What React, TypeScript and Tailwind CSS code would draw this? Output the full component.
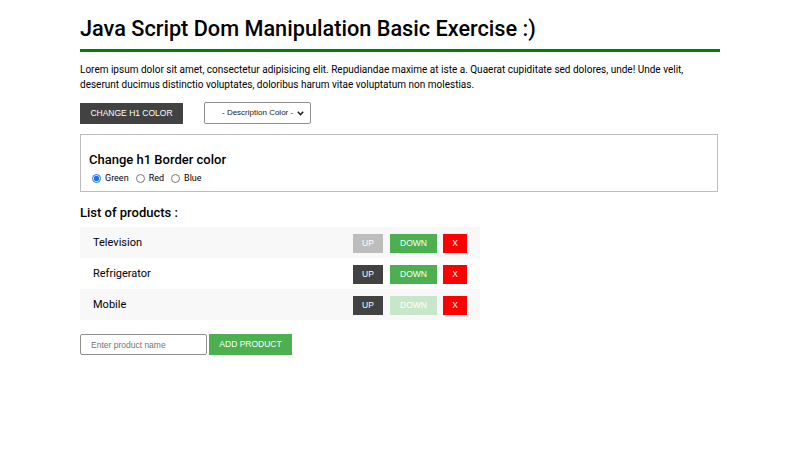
import { useState } from "react";

export default function App() {
  const [products, setProducts] = useState(["Television", "Refrigerator", "Mobile"]);
  const [border, setBorder] = useState("green");
  const [name, setName] = useState("");

  function move(index: number, dir: number) {
    setProducts((prev) => {
      const next = [...prev];
      const t = index + dir;
      if (t < 0 || t >= next.length) return prev;
      [next[index], next[t]] = [next[t], next[index]];
      return next;
    });
  }

  const borderClass =
    border === "green" ? "border-[#008000]" : border === "red" ? "border-[#ff0000]" : "border-[#0000ff]";

  return (
    <div className="min-h-[450px] bg-white font-['Roboto',sans-serif] text-black">
      <div className="mx-auto w-[640px] pt-[14px]">
        <h1 className={"border-b-[3px] pb-[5px] text-[21.7px] font-medium leading-[30px] " + borderClass}>
          Java Script Dom Manipulation Basic Exercise :)
        </h1>
        <p className="mt-[10px] text-[10px] leading-[15px]">
          Lorem ipsum dolor sit amet, consectetur adipisicing elit. Repudiandae maxime at iste a. Quaerat cupiditate sed dolores, unde! Unde velit, deserunt ducimus distinctio voluptates, doloribus harum vitae voluptatum non molestias.
        </p>

        <div className="mt-[10px] flex items-center gap-[21px] font-['Liberation_Sans',sans-serif]">
          <button className="h-[21px] w-[103px] bg-[#424242] text-[8.5px] text-white">CHANGE H1 COLOR</button>
          <div className="relative h-[22px] w-[107px]">
            <select className="block h-[22px] w-full appearance-none rounded-[2px] border border-[#8f8f8f] bg-white pl-[17px] text-[8px] text-[#222]">
              <option>- Description Color -</option>
              <option>Red</option>
              <option>Blue</option>
            </select>
            <svg
              className="pointer-events-none absolute right-[7px] top-[9px]"
              width="7"
              height="5"
              viewBox="0 0 7 5"
              fill="none"
            >
              <path d="M0.8 0.8 L3.5 3.6 L6.2 0.8" stroke="#222" strokeWidth="1.5" />
            </svg>
          </div>
        </div>

        <div className="mt-[10px] w-[638px] border border-[#bdbdbd] px-[8px] pb-[6px] pt-[16px]">
          <h2 className="text-[13px] font-medium leading-[18px]">Change h1 Border color</h2>
          <div className="mt-[2px] flex items-center text-[9px] leading-[14px]">
            {["Green", "Red", "Blue"].map((c) => (
              <label key={c} className="mr-[4px] flex items-center">
                <input
                  type="radio"
                  name="border"
                  checked={border === c.toLowerCase()}
                  onChange={() => setBorder(c.toLowerCase())}
                  className="ml-[3px] mr-[4px] h-[9px] w-[9px] accent-[#1a73e8]"
                />
                {c}
              </label>
            ))}
          </div>
        </div>

        <h3 className="mt-[12px] text-[13px] font-medium leading-[18px]">List of products :</h3>

        <ul className="mt-[5px] w-[400px]">
          {products.map((p, i) => (
            <li
              key={p}
              className={"flex h-[31px] items-center px-[13px] " + (i % 2 === 0 ? "bg-[#f8f8f8]" : "bg-white")}
            >
              <span className="flex-1 pt-[2px] text-[11px]">{p}</span>
              <div className="flex items-center pt-[1px] font-['Liberation_Sans',sans-serif] text-[8.5px] text-white">
                <button
                  disabled={i === 0}
                  onClick={() => move(i, -1)}
                  className={"h-[19px] w-[30px] " + (i === 0 ? "bg-[#bdbdbd]" : "bg-[#424242]")}
                >
                  UP
                </button>
                <button
                  disabled={i === products.length - 1}
                  onClick={() => move(i, 1)}
                  className={
                    "ml-[7px] h-[19px] w-[47px] " + (i === products.length - 1 ? "bg-[#c8e6c9]" : "bg-[#4caf50]")
                  }
                >
                  DOWN
                </button>
                <button
                  onClick={() => setProducts((prev) => prev.filter((_, j) => j !== i))}
                  className="ml-[6px] h-[19px] w-[24px] bg-[#ff0000]"
                >
                  X
                </button>
              </div>
            </li>
          ))}
        </ul>

        <div className="mt-[14px] flex items-center gap-[2px] font-['Liberation_Sans',sans-serif]">
          <input
            value={name}
            onChange={(e) => setName(e.target.value)}
            placeholder="Enter product name"
            className="h-[21px] w-[127px] rounded-[2px] border border-[#8f8f8f] px-[10px] text-[8.5px] placeholder:text-[#757575]"
          />
          <button
            onClick={() => {
              if (!name.trim()) return;
              setProducts((prev) => [...prev, name.trim()]);
              setName("");
            }}
            className="h-[21px] w-[83px] bg-[#4caf50] text-[8.5px] text-white"
          >
            ADD PRODUCT
          </button>
        </div>
      </div>
    </div>
  );
}
